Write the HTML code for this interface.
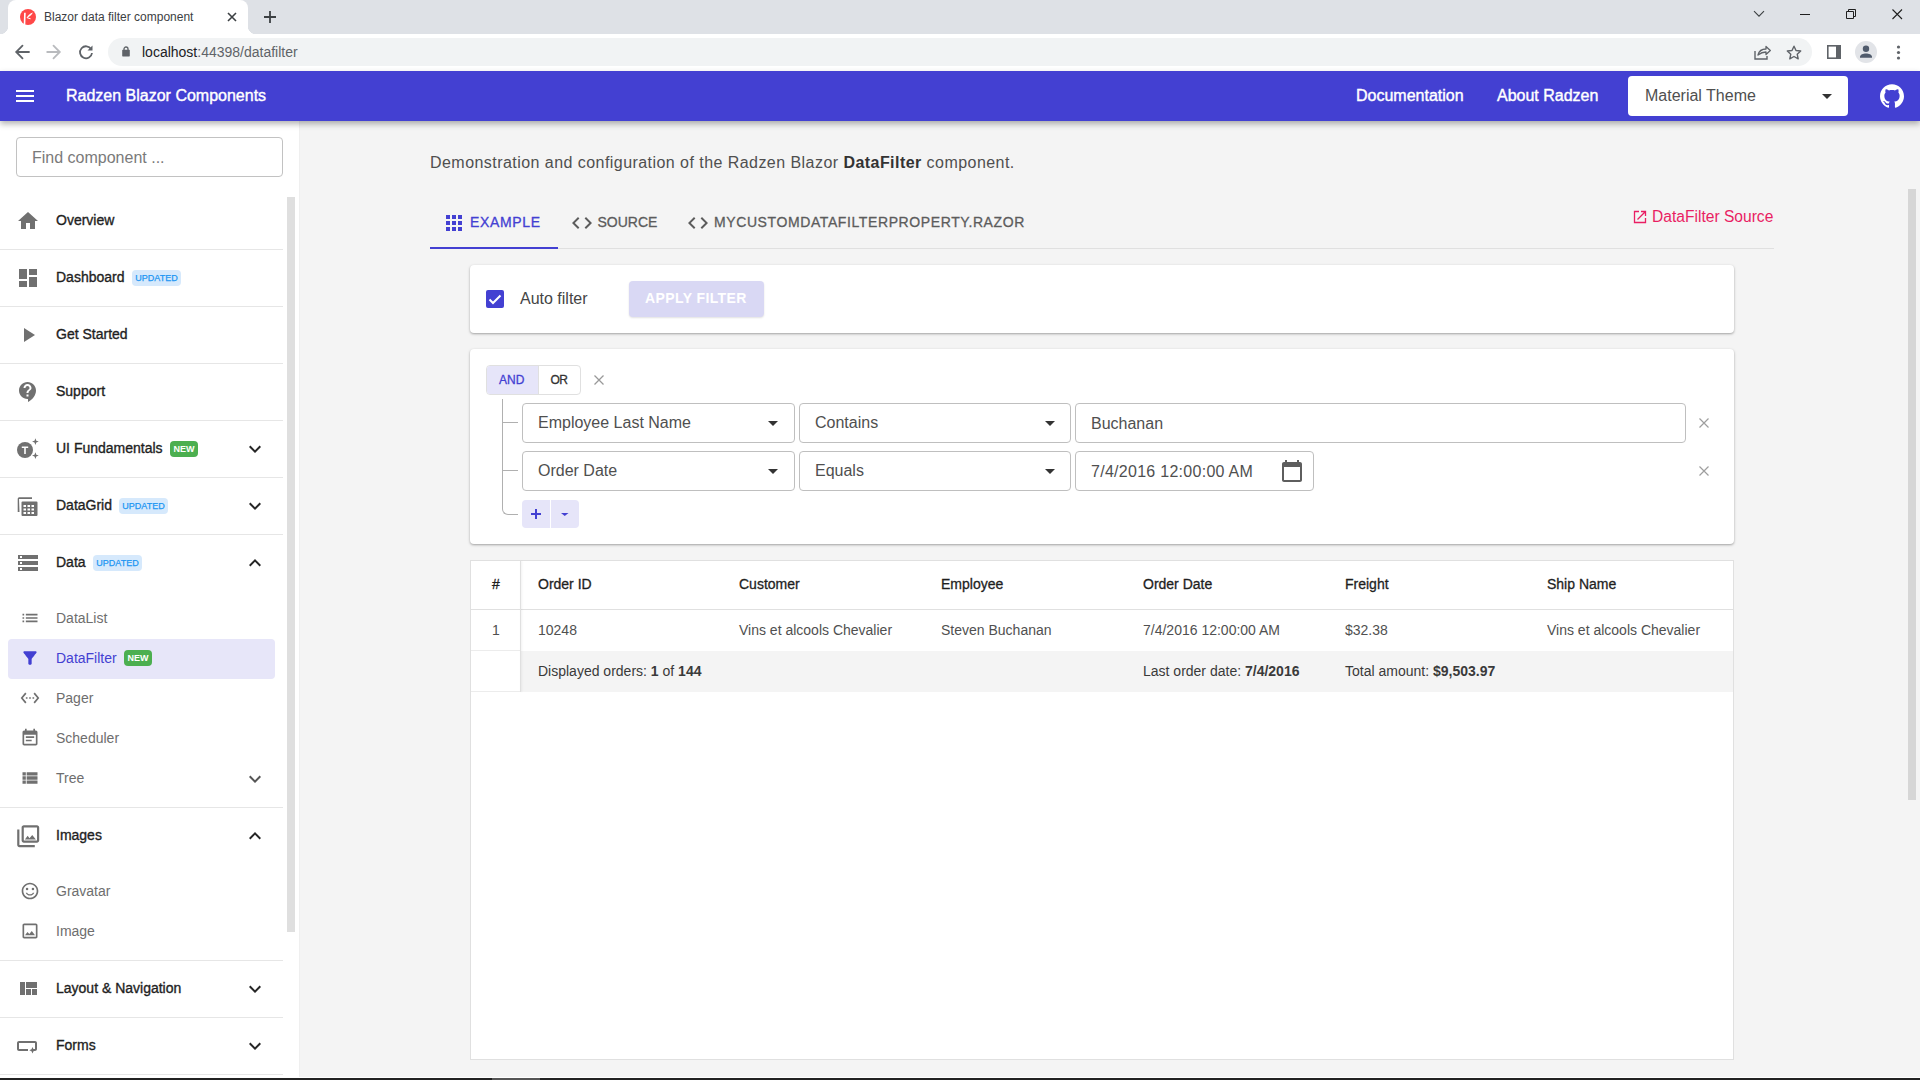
<!DOCTYPE html>
<html><head><meta charset="utf-8">
<style>
*{box-sizing:border-box;margin:0;padding:0}
html,body{width:1920px;height:1080px;overflow:hidden;font-family:"Liberation Sans",sans-serif;background:#f4f4f4;position:relative}
.a{position:absolute}
svg{display:block;position:absolute}
.t{position:absolute;white-space:nowrap;line-height:1}
/* chrome */
#tabbar{left:0;top:0;width:1920px;height:34px;background:#dee1e6}
#tab{left:8px;top:0;width:240px;height:34px;background:#fff;border-radius:8px 8px 0 0}
#toolbar{left:0;top:34px;width:1920px;height:37px;background:#fff}
#omni{left:108px;top:38px;width:1704px;height:28px;background:#f1f3f4;border-radius:14px}
/* header */
#header{left:0;top:71px;width:1920px;height:50px;background:#4340d2;box-shadow:0 3px 6px rgba(0,0,0,.3);z-index:5}
.h{color:#fff;font-size:16px;-webkit-text-stroke:.4px #fff}
/* sidebar */
#sidebar{left:0;top:121px;width:300px;height:956px;background:#fff;border-right:1px solid #efefef}
.nav{font-size:14px;color:#1f1f1f;-webkit-text-stroke:.35px #1f1f1f}
.dv{position:absolute;left:0;width:283px;height:1px;background:#e6e6e6}
.sub{font-size:14px;color:#6e6e6e}
.badge{position:absolute;height:16px;border-radius:4px;font-size:9px;line-height:16px;text-align:center;-webkit-text-stroke:.25px currentColor}
.upd{background:#d6e9fc;color:#2196f3;width:49px}
.new{background:#4caf50;color:#fff;width:28px;font-weight:bold;-webkit-text-stroke:0}
.ico{fill:#707070}
.chev{fill:#262626}
/* main */
.card{position:absolute;background:#fff;border-radius:4px;box-shadow:0 1px 2.5px rgba(0,0,0,.35)}
.inp{position:absolute;background:#fff;border:1px solid #bfbfbf;border-radius:4px}
.it{font-size:16px;color:#4f4f4f}
.tc{font-size:14px;color:#505050}
.th{font-size:14px;color:#1f1f1f;-webkit-text-stroke:.3px #1f1f1f}
.ft{font-size:14px;color:#3a3a3a}
.tab{font-size:14px;color:#5c5c5c;-webkit-text-stroke:.3px currentColor}
</style></head><body>

<!-- ===== Browser chrome ===== -->
<div id="tabbar" class="a"></div>
<div id="tab" class="a"></div>
<div class="a" style="left:0;top:26px;width:8px;height:8px;background:radial-gradient(circle at 0 0,#dee1e6 8px,#fff 8.5px)"></div>
<div class="a" style="left:248px;top:26px;width:8px;height:8px;background:radial-gradient(circle at 8px 0,#dee1e6 8px,#fff 8.5px)"></div>
<div id="toolbar" class="a"></div>
<div id="omni" class="a"></div>
<!-- favicon -->
<svg style="left:20px;top:9px" width="16" height="16" viewBox="0 0 16 16"><circle cx="8" cy="8" r="8" fill="#ff4848"/><path d="M4.9 3.8L4.5 16" stroke="#fff" stroke-width="1.6" fill="none"/><path d="M6.6 8.9C7.8 6.2 10.3 4.3 12.9 3.6 11.8 6 9.4 8.1 6.6 8.9z" fill="#fff"/><path d="M6.8 8.6l3.8 1.2" stroke="#fff" stroke-width="1" fill="none"/></svg>
<div class="t" style="left:44px;top:11px;font-size:12px;color:#3c4043">Blazor data filter component</div>
<svg style="left:226px;top:11px" width="12" height="12" viewBox="0 0 12 12"><path d="M2 2l8 8M10 2l-8 8" stroke="#3c4043" stroke-width="1.6"/></svg>
<svg style="left:263px;top:11px" width="14" height="12" viewBox="0 0 14 12"><path d="M7 0v12M1 6h12" stroke="#3c4043" stroke-width="1.8"/></svg>
<!-- window controls -->
<svg style="left:1752px;top:9px" width="14" height="12" viewBox="0 0 14 12"><path d="M2 2.2l5 5 5-5" stroke="#3c4043" stroke-width="1.1" fill="none"/></svg>
<div class="a" style="left:1800px;top:14px;width:10px;height:1px;background:#1f1f1f"></div>
<svg style="left:1845px;top:8px" width="12" height="12" viewBox="0 0 12 12"><path d="M1.5 3.5h7v7h-7z M3.5 3.5v-2h7v7h-2" stroke="#1f1f1f" stroke-width="1" fill="none"/></svg>
<svg style="left:1891px;top:9px" width="12" height="11" viewBox="0 0 12 11"><path d="M1.5 .5l9.5 9.5M11 .5l-9.5 9.5" stroke="#1f1f1f" stroke-width="1.1"/></svg>
<!-- nav buttons -->
<svg style="left:14px;top:44px" width="16" height="16" viewBox="0 0 16 16"><path d="M15 8H2.2M8.5 1.6L2.2 8l6.3 6.4" stroke="#5f6368" stroke-width="1.8" fill="none" stroke-linecap="round"/></svg>
<svg style="left:46px;top:44px" width="16" height="16" viewBox="0 0 16 16"><path d="M1.2 8h12.6M7.5 1.6L13.8 8l-6.3 6.4" stroke="#b9bbbe" stroke-width="1.8" fill="none" stroke-linecap="round"/></svg>
<svg style="left:78px;top:44px" width="16" height="16" viewBox="0 0 16 16"><path d="M13.2 5.2A6 6 0 1 0 14 9" stroke="#5f6368" stroke-width="1.8" fill="none"/><path d="M14.5 1.5v5h-5z" fill="#5f6368"/></svg>
<svg style="left:121px;top:45px" width="10" height="12" viewBox="0 0 10 12"><path d="M3 5.5V4a2 2 0 0 1 4 0v1.5" stroke="#5f6368" stroke-width="1.3" fill="none"/><rect x="1.2" y="4.8" width="7.6" height="6.6" rx=".6" fill="#5f6368"/></svg>
<div class="t" style="left:142px;top:45px;font-size:14px;color:#202124">localhost<span style="color:#5f6368">:44398/datafilter</span></div>
<!-- right toolbar icons -->
<svg style="left:1754px;top:45px" width="17" height="15" viewBox="0 0 17 15"><path d="M1 6v8h12v-3" stroke="#5f6368" stroke-width="1.4" fill="none"/><path d="M4 10c1-4 4-6 8-6V1.5l4.3 4-4.3 4V7c-3 0-5.5 1-8 3z" stroke="#5f6368" stroke-width="1.3" fill="none" stroke-linejoin="round"/></svg>
<svg style="left:1786px;top:45px" width="16" height="15" viewBox="0 0 16 15"><path d="M8 1.2l2 4.3 4.7.5-3.5 3.2 1 4.6L8 11.5l-4.2 2.3 1-4.6L1.3 6l4.7-.5z" stroke="#5f6368" stroke-width="1.4" fill="none" stroke-linejoin="round"/></svg>
<svg style="left:1827px;top:45px" width="14" height="14" viewBox="0 0 14 14"><rect x=".8" y=".8" width="12.4" height="12.4" stroke="#5f6368" stroke-width="1.6" fill="none"/><rect x="9" y="0" width="5" height="14" fill="#5f6368"/></svg>
<div class="a" style="left:1855px;top:41px;width:22px;height:22px;border-radius:11px;background:#e2e4e8"></div>
<svg style="left:1858px;top:44px" width="16" height="16" viewBox="0 0 16 16"><circle cx="8" cy="4.8" r="3.2" fill="#505b6c"/><path d="M2 13.8v-1c0-2.2 3.3-3.4 6-3.4s6 1.2 6 3.4v1z" fill="#505b6c"/></svg>
<svg style="left:1896px;top:45px" width="5" height="15" viewBox="0 0 5 15"><circle cx="2.5" cy="2" r="1.6" fill="#5f6368"/><circle cx="2.5" cy="7.5" r="1.6" fill="#5f6368"/><circle cx="2.5" cy="13" r="1.6" fill="#5f6368"/></svg>

<!-- ===== Header ===== -->
<div id="header" class="a">
  <svg style="left:16px;top:19px" width="18" height="12" viewBox="0 0 18 12"><rect x="0" y="0" width="18" height="2" fill="#fff"/><rect x="0" y="5" width="18" height="2" fill="#fff"/><rect x="0" y="10" width="18" height="2" fill="#fff"/></svg>
  <div class="t h" style="left:66px;top:17px">Radzen Blazor Components</div>
  <div class="t h" style="left:1356px;top:17px">Documentation</div>
  <div class="t h" style="left:1497px;top:17px">About Radzen</div>
  <div class="a" style="left:1628px;top:5px;width:220px;height:40px;background:#fff;border-radius:4px"></div>
  <div class="t" style="left:1645px;top:17px;font-size:16px;color:#4f4f4f">Material Theme</div>
  <svg style="left:1815px;top:13px" width="24" height="24" viewBox="0 0 24 24"><path d="M7 10l5 5 5-5z" fill="#333"/></svg>
  <svg style="left:1880px;top:13px" width="24" height="24" viewBox="0 0 24 24"><path fill="#fff" d="M12 .297c-6.63 0-12 5.373-12 12 0 5.303 3.438 9.8 8.205 11.385.6.113.82-.258.82-.577 0-.285-.01-1.04-.015-2.04-3.338.724-4.042-1.61-4.042-1.61C4.422 18.07 3.633 17.7 3.633 17.7c-1.087-.744.084-.729.084-.729 1.205.084 1.838 1.236 1.838 1.236 1.07 1.835 2.809 1.305 3.495.998.108-.776.417-1.305.76-1.605-2.665-.3-5.466-1.332-5.466-5.93 0-1.31.465-2.38 1.235-3.22-.135-.303-.54-1.523.105-3.176 0 0 1.005-.322 3.3 1.23.96-.267 1.98-.399 3-.405 1.02.006 2.04.138 3 .405 2.28-1.552 3.285-1.23 3.285-1.23.645 1.653.24 2.873.12 3.176.765.84 1.23 1.91 1.23 3.22 0 4.61-2.805 5.625-5.475 5.92.42.36.81 1.096.81 2.22 0 1.606-.015 2.896-.015 3.286 0 .315.21.69.825.57C20.565 22.092 24 17.592 24 12.297c0-6.627-5.373-12-12-12"/></svg>
</div>

<!-- ===== Sidebar ===== -->
<div id="sidebar" class="a"></div>
<div class="a" style="left:16px;top:137px;width:267px;height:40px;border:1px solid #c2c2c2;border-radius:4px;background:#fff"></div>
<div class="t" style="left:32px;top:150px;font-size:16px;color:#7a7a7a">Find component ...</div>
<div class="a" style="left:287px;top:197px;width:8px;height:735px;background:#dfdfdf"></div>
<!-- Overview c=220 -->
<svg class="ico" style="left:16px;top:209px" width="24" height="24" viewBox="0 0 24 24"><path d="M10 20v-6h4v6h5v-8h3L12 3 2 12h3v8z"/></svg>
<div class="t nav" style="left:56px;top:213px">Overview</div>
<div class="dv" style="top:249px"></div>
<!-- Dashboard c=277 -->
<svg class="ico" style="left:16px;top:266px" width="24" height="24" viewBox="0 0 24 24"><path d="M3 13h8V3H3v10zm0 8h8v-6H3v6zm10 0h8V11h-8v10zm0-18v6h8V3h-8z"/></svg>
<div class="t nav" style="left:56px;top:270px">Dashboard</div>
<div class="badge upd" style="left:132px;top:270px">UPDATED</div>
<div class="dv" style="top:306px"></div>
<!-- Get Started c=334 -->
<svg class="ico" style="left:16px;top:323px" width="24" height="24" viewBox="0 0 24 24"><path d="M8 5v14l11-7z"/></svg>
<div class="t nav" style="left:56px;top:327px">Get Started</div>
<div class="dv" style="top:363px"></div>
<!-- Support c=391 -->
<svg class="ico" style="left:16px;top:380px" width="24" height="24" viewBox="0 0 24 24"><path d="M11.5 2C6.81 2 3 5.81 3 10.5S6.81 19 11.5 19h.5v3c4.86-2.34 8-7 8-11.5C20 5.81 16.19 2 11.5 2zm1 14.5h-2v-2h2v2zm0-3.5h-2c0-3.25 3-3 3-5 0-1.1-.9-2-2-2s-2 .9-2 2h-2c0-2.21 1.79-4 4-4s4 1.79 4 4c0 2.5-3 2.75-3 5z"/></svg>
<div class="t nav" style="left:56px;top:384px">Support</div>
<div class="dv" style="top:420px"></div>
<!-- UI Fundamentals c=448 -->
<svg class="ico" style="left:16px;top:437px" width="24" height="24" viewBox="0 0 24 24"><circle cx="9" cy="13" r="8"/><path d="M5.8 9.5h6.4v1.6H9.8V17H8.2v-5.9H5.8z" fill="#fff"/><path d="M19.4 1.2l.9 2.5 2.5.9-2.5.9-.9 2.5-.9-2.5-2.5-.9 2.5-.9zM19.4 15.2l.9 2.5 2.5.9-2.5.9-.9 2.5-.9-2.5-2.5-.9 2.5-.9z"/></svg>
<div class="t nav" style="left:56px;top:441px">UI Fundamentals</div>
<div class="badge new" style="left:170px;top:441px">NEW</div>
<svg class="chev" style="left:243px;top:437px" width="24" height="24" viewBox="0 0 24 24"><path d="M16.59 8.59L12 13.17 7.41 8.59 6 10l6 6 6-6z"/></svg>
<div class="dv" style="top:477px"></div>
<!-- DataGrid c=505 -->
<svg class="ico" style="left:16px;top:494px" width="24" height="24" viewBox="0 0 24 24"><path d="M3 5h13V3.2H3.2A1.5 1.5 0 0 0 1.7 4.7V18h1.8z" /><path d="M6.5 7.5h14a1 1 0 0 1 1 1V21a1 1 0 0 1-1 1h-14a1 1 0 0 1-1-1V8.5a1 1 0 0 1 1-1zm1 3.5v2h2.5v-2zm4 0v2H14v-2zm4 0v2h2.5v-2zm-8 3.5v2h2.5v-2zm4 0v2H14v-2zm4 0v2h2.5v-2zm-8 3.5v2h2.5v-2zm4 0v2H14v-2zm4 0v2h2.5v-2z" fill-rule="evenodd"/></svg>
<div class="t nav" style="left:56px;top:498px">DataGrid</div>
<div class="badge upd" style="left:119px;top:498px">UPDATED</div>
<svg class="chev" style="left:243px;top:494px" width="24" height="24" viewBox="0 0 24 24"><path d="M16.59 8.59L12 13.17 7.41 8.59 6 10l6 6 6-6z"/></svg>
<div class="dv" style="top:534px"></div>
<!-- Data c=562 -->
<svg class="ico" style="left:16px;top:551px" width="24" height="24" viewBox="0 0 24 24"><path d="M2 20h20v-4H2v4zm2-3h2v2H4v-2zM2 4v4h20V4H2zm4 3H4V5h2v2zm-4 7h20v-4H2v4zm2-3h2v2H4v-2z"/></svg>
<div class="t nav" style="left:56px;top:555px">Data</div>
<div class="badge upd" style="left:93px;top:555px">UPDATED</div>
<svg class="chev" style="left:243px;top:551px" width="24" height="24" viewBox="0 0 24 24"><path d="M12 8l-6 6 1.41 1.41L12 10.83l4.59 4.58L18 14z"/></svg>
<!-- DataList c=618 -->
<svg class="ico" style="left:19.5px;top:608px" width="20" height="20" viewBox="0 0 24 24"><path d="M3 13h2v-2H3v2zm0 4h2v-2H3v2zm0-8h2V7H3v2zm4 4h14v-2H7v2zm0 4h14v-2H7v2zM7 7v2h14V7H7z"/></svg>
<div class="t sub" style="left:56px;top:611px">DataList</div>
<!-- DataFilter selected c=658 -->
<div class="a" style="left:8px;top:639px;width:267px;height:40px;border-radius:4px;background:#e7e6f9"></div>
<svg style="left:19.5px;top:648px" width="20" height="20" viewBox="0 0 24 24"><path fill="#4340d2" d="M4.25 5.61C6.27 8.2 10 13 10 13v6c0 .55.45 1 1 1h2c.55 0 1-.45 1-1v-6s3.72-4.8 5.74-7.39c.51-.66.04-1.61-.79-1.61H5.04c-.83 0-1.3.95-.79 1.61z"/></svg>
<div class="t sub" style="left:56px;top:651px;color:#4340d2">DataFilter</div>
<div class="badge new" style="left:124px;top:650px">NEW</div>
<!-- Pager c=698 -->
<svg class="ico" style="left:19.5px;top:688px" width="20" height="20" viewBox="0 0 24 24"><path d="M7.77 6.76L6.23 5.48.82 12l5.41 6.52 1.54-1.28L3.42 12l4.35-5.24zM7 13h2v-2H7v2zm10-2h-2v2h2v-2zm-6 2h2v-2h-2v2zm6.77-7.52l-1.54 1.28L20.58 12l-4.35 5.24 1.54 1.28L23.18 12l-5.41-6.52z"/></svg>
<div class="t sub" style="left:56px;top:691px">Pager</div>
<!-- Scheduler c=738 -->
<svg class="ico" style="left:19.5px;top:728px" width="20" height="20" viewBox="0 0 24 24"><path d="M17 10H7v2h10v-2zm2-7h-1V1h-2v2H8V1H6v2H5c-1.11 0-1.99.9-1.99 2L3 19c0 1.1.89 2 2 2h14c1.1 0 2-.9 2-2V5c0-1.1-.9-2-2-2zm0 16H5V8h14v11zm-5-5H7v2h7v-2z"/></svg>
<div class="t sub" style="left:56px;top:731px">Scheduler</div>
<!-- Tree c=778 -->
<svg class="ico" style="left:19.5px;top:768px" width="20" height="20" viewBox="0 0 24 24"><path d="M3 14h4v-4H3v4zm0 5h4v-4H3v4zM3 9h4V5H3v4zm5 5h13v-4H8v4zm0 5h13v-4H8v4zM8 5v4h13V5H8z"/></svg>
<div class="t sub" style="left:56px;top:771px">Tree</div>
<svg style="left:243px;top:767px;fill:#555" width="24" height="24" viewBox="0 0 24 24"><path d="M16.59 8.59L12 13.17 7.41 8.59 6 10l6 6 6-6z"/></svg>
<div class="dv" style="top:807px"></div>
<!-- Images c=835 -->
<svg class="ico" style="left:15px;top:822.5px" width="26.4" height="26.4" viewBox="0 0 24 24"><path d="M20 4v12H8V4h12m0-2H8c-1.1 0-2 .9-2 2v12c0 1.1.9 2 2 2h12c1.1 0 2-.9 2-2V4c0-1.1-.9-2-2-2zm-8.5 9.67l1.69 2.26 2.48-3.1L19 15H9zM2 6v14c0 1.1.9 2 2 2h14v-2H4V6H2z"/></svg>
<div class="t nav" style="left:56px;top:828px">Images</div>
<svg class="chev" style="left:243px;top:824px" width="24" height="24" viewBox="0 0 24 24"><path d="M12 8l-6 6 1.41 1.41L12 10.83l4.59 4.58L18 14z"/></svg>
<!-- Gravatar c=891 -->
<svg class="ico" style="left:19.5px;top:881px" width="20" height="20" viewBox="0 0 24 24"><circle cx="15.5" cy="9.5" r="1.5"/><circle cx="8.5" cy="9.5" r="1.5"/><path d="M12 16c-1.48 0-2.75-.81-3.45-2H6.88c.8 2.05 2.79 3.5 5.12 3.5s4.32-1.45 5.12-3.5h-1.67c-.69 1.19-1.97 2-3.45 2zm-.01-14C6.47 2 2 6.48 2 12s4.47 10 9.99 10C17.52 22 22 17.52 22 12S17.52 2 11.99 2zM12 20c-4.42 0-8-3.58-8-8s3.58-8 8-8 8 3.58 8 8-3.58 8-8 8z"/></svg>
<div class="t sub" style="left:56px;top:884px">Gravatar</div>
<!-- Image c=931 -->
<svg class="ico" style="left:19.5px;top:921px" width="20" height="20" viewBox="0 0 24 24"><path d="M19 5v14H5V5h14m0-2H5c-1.1 0-2 .9-2 2v14c0 1.1.9 2 2 2h14c1.1 0 2-.9 2-2V5c0-1.1-.9-2-2-2zm-4.86 8.86l-3 3.87L9 13.14 6 17h12l-3.86-5.14z"/></svg>
<div class="t sub" style="left:56px;top:924px">Image</div>
<div class="dv" style="top:960px"></div>
<!-- Layout c=988 -->
<svg class="ico" style="left:16px;top:977px" width="24" height="24" viewBox="0 0 24 24"><path d="M10 18h5v-6h-5v6zm-6 0h5V5H4v13zm12 0h5v-6h-5v6zM10 5v6h11V5H10z"/></svg>
<div class="t nav" style="left:56px;top:981px">Layout &amp; Navigation</div>
<svg class="chev" style="left:243px;top:977px" width="24" height="24" viewBox="0 0 24 24"><path d="M16.59 8.59L12 13.17 7.41 8.59 6 10l6 6 6-6z"/></svg>
<div class="dv" style="top:1017px"></div>
<!-- Forms c=1045 -->
<svg class="ico" style="left:16px;top:1034px" width="24" height="24" viewBox="0 0 24 24"><path d="M21 9.5v5.5c0 1.1-.9 2-2 2h-3v-2h3V9H3v6h9v2H3c-1.1 0-2-.9-2-2V9c0-1.1.9-2 2-2h16c1.1 0 2 .9 2 2zM16.5 13l1 2.2 2.2 1-2.2 1-1 2.3-1-2.3-2.2-1 2.2-1z"/></svg>
<div class="t nav" style="left:56px;top:1038px">Forms</div>
<svg class="chev" style="left:243px;top:1034px" width="24" height="24" viewBox="0 0 24 24"><path d="M16.59 8.59L12 13.17 7.41 8.59 6 10l6 6 6-6z"/></svg>
<div class="dv" style="top:1074px"></div>


<!-- ===== Main ===== -->
<div class="t" style="left:430px;top:155px;font-size:16px;color:#4f4f4f;letter-spacing:.45px">Demonstration and configuration of the Radzen Blazor <b style="color:#333">DataFilter</b> component.</div>
<!-- tabs -->
<div class="a" style="left:430px;top:248px;width:1344px;height:1px;background:#e0e0e0"></div>
<div class="a" style="left:430px;top:247px;width:128px;height:2px;background:#4340d2"></div>
<svg style="left:446px;top:215px" width="16" height="16" viewBox="0 0 16 16" fill="#4340d2"><rect x="0" y="0" width="4" height="4"/><rect x="6" y="0" width="4" height="4"/><rect x="12" y="0" width="4" height="4"/><rect x="0" y="6" width="4" height="4"/><rect x="6" y="6" width="4" height="4"/><rect x="12" y="6" width="4" height="4"/><rect x="0" y="12" width="4" height="4"/><rect x="6" y="12" width="4" height="4"/><rect x="12" y="12" width="4" height="4"/></svg>
<div class="t tab" style="left:470px;top:215px;color:#4340d2;letter-spacing:.65px">EXAMPLE</div>
<svg style="left:570px;top:211px" width="24" height="24" viewBox="0 0 24 24"><path fill="#5c5c5c" d="M9.4 16.6L4.8 12l4.6-4.6L8 6l-6 6 6 6 1.4-1.4zm5.2 0l4.6-4.6-4.6-4.6L16 6l6 6-6 6-1.4-1.4z"/></svg>
<div class="t tab" style="left:597.5px;top:215px;letter-spacing:0px">SOURCE</div>
<svg style="left:686px;top:211px" width="24" height="24" viewBox="0 0 24 24"><path fill="#5c5c5c" d="M9.4 16.6L4.8 12l4.6-4.6L8 6l-6 6 6 6 1.4-1.4zm5.2 0l4.6-4.6-4.6-4.6L16 6l6 6-6 6-1.4-1.4z"/></svg>
<div class="t tab" style="left:714px;top:215px;letter-spacing:.6px">MYCUSTOMDATAFILTERPROPERTY.RAZOR</div>
<svg style="left:1633px;top:210px" width="14" height="14" viewBox="0 0 14 14"><path d="M6 1.5H1.5v11h11V8" stroke="#e91e63" stroke-width="1.3" fill="none"/><path d="M8 1.5h4.5V6M12.5 1.5L4.5 9.5" stroke="#e91e63" stroke-width="1.3" fill="none"/></svg>
<div class="t" style="left:1652px;top:209px;font-size:15.6px;color:#e91e63">DataFilter Source</div>

<!-- card 1 -->
<div class="card" style="left:470px;top:265px;width:1264px;height:68px"></div>
<div class="a" style="left:486px;top:290px;width:18px;height:18px;background:#4340d2;border-radius:2px"></div>
<svg style="left:486px;top:290px" width="18" height="18" viewBox="0 0 18 18"><path d="M3.5 9.5l3.5 3.5 7.5-7.5" stroke="#fff" stroke-width="2" fill="none"/></svg>
<div class="t" style="left:520px;top:291px;font-size:16px;color:#454545">Auto filter</div>
<div class="a" style="left:629px;top:281px;width:135px;height:36px;background:#d9d8f4;border-radius:4px;box-shadow:0 1px 2px rgba(0,0,0,.12)"></div>
<div class="t" style="left:645px;top:291px;font-size:14px;font-weight:bold;color:#fff;letter-spacing:.4px">APPLY FILTER</div>

<!-- card 2 -->
<div class="card" style="left:470px;top:349px;width:1264px;height:195px"></div>
<div class="a" style="left:486px;top:365px;width:95px;height:30px;border:1px solid #e0e0e0;border-radius:4px;background:#fff;overflow:hidden"><div class="a" style="left:0;top:0;width:52px;height:28px;background:#e6e5f9;border-right:1px solid #e0e0e0"></div></div>
<div class="t" style="left:499px;top:374px;font-size:12px;color:#4340d2;letter-spacing:.1px;-webkit-text-stroke:.3px #4340d2">AND</div>
<div class="t" style="left:550.5px;top:374px;font-size:12px;color:#333;letter-spacing:-.5px;-webkit-text-stroke:.3px #333">OR</div>
<svg style="left:593px;top:374px" width="12" height="12" viewBox="0 0 12 12"><path d="M1.5 1.5l9 9M10.5 1.5l-9 9" stroke="#999" stroke-width="1.3"/></svg>
<!-- tree lines -->
<div class="a" style="left:502px;top:399px;width:1px;height:108px;background:#b0b0b0"></div>
<div class="a" style="left:502px;top:506px;width:16px;height:9px;border-left:1px solid #b0b0b0;border-bottom:1px solid #b0b0b0;border-bottom-left-radius:6px"></div>
<div class="a" style="left:502px;top:422px;width:16px;height:1px;background:#b0b0b0"></div>
<div class="a" style="left:502px;top:470px;width:16px;height:1px;background:#b0b0b0"></div>
<!-- row 1 -->
<div class="inp" style="left:522px;top:403px;width:273px;height:40px"></div>
<div class="t it" style="left:538px;top:415px">Employee Last Name</div>
<svg style="left:761px;top:411px" width="24" height="24" viewBox="0 0 24 24"><path d="M7 10l5 5 5-5z" fill="#333"/></svg>
<div class="inp" style="left:799px;top:403px;width:272px;height:40px"></div>
<div class="t it" style="left:815px;top:415px">Contains</div>
<svg style="left:1038px;top:411px" width="24" height="24" viewBox="0 0 24 24"><path d="M7 10l5 5 5-5z" fill="#333"/></svg>
<div class="inp" style="left:1075px;top:403px;width:611px;height:40px"></div>
<div class="t it" style="left:1091px;top:416px">Buchanan</div>
<svg style="left:1698px;top:417px" width="12" height="12" viewBox="0 0 12 12"><path d="M1.5 1.5l9 9M10.5 1.5l-9 9" stroke="#9e9e9e" stroke-width="1.2"/></svg>
<!-- row 2 -->
<div class="inp" style="left:522px;top:451px;width:273px;height:40px"></div>
<div class="t it" style="left:538px;top:463px">Order Date</div>
<svg style="left:761px;top:459px" width="24" height="24" viewBox="0 0 24 24"><path d="M7 10l5 5 5-5z" fill="#333"/></svg>
<div class="inp" style="left:799px;top:451px;width:272px;height:40px"></div>
<div class="t it" style="left:815px;top:463px">Equals</div>
<svg style="left:1038px;top:459px" width="24" height="24" viewBox="0 0 24 24"><path d="M7 10l5 5 5-5z" fill="#333"/></svg>
<div class="inp" style="left:1075px;top:451px;width:239px;height:40px"></div>
<div class="t it" style="left:1091px;top:464px;letter-spacing:.28px">7/4/2016 12:00:00 AM</div>
<svg style="left:1280px;top:459px" width="24" height="24" viewBox="0 0 24 24"><path fill="#5e5e5e" d="M20 3h-1V1h-2v2H7V1H5v2H4c-1.1 0-2 .9-2 2v16c0 1.1.9 2 2 2h16c1.1 0 2-.9 2-2V5c0-1.1-.9-2-2-2zm0 18H4V8h16v13z"/></svg>
<svg style="left:1698px;top:465px" width="12" height="12" viewBox="0 0 12 12"><path d="M1.5 1.5l9 9M10.5 1.5l-9 9" stroke="#9e9e9e" stroke-width="1.2"/></svg>
<!-- +/- -->
<div class="a" style="left:522px;top:500px;width:28px;height:28px;background:#e6e5f9;border-radius:4px 0 0 4px"></div>
<div class="a" style="left:551px;top:500px;width:28px;height:28px;background:#e6e5f9;border-radius:0 4px 4px 0"></div>
<svg style="left:531px;top:509px" width="10" height="10" viewBox="0 0 10 10"><path d="M5 0v10M0 5h10" stroke="#4340d2" stroke-width="2"/></svg>
<svg style="left:561px;top:513px" width="8" height="3" viewBox="0 0 8 3"><path d="M0 0h7.5L3.75 3z" fill="#4340d2"/></svg>

<!-- grid -->
<div class="a" style="left:470px;top:560px;width:1264px;height:500px;background:#fff;border:1px solid #e0e0e0"></div>
<div class="a" style="left:521px;top:651px;width:1212px;height:41px;background:#f4f4f4"></div>
<div class="a" style="left:471px;top:609px;width:1262px;height:1px;background:#e0e0e0"></div>
<div class="a" style="left:471px;top:650px;width:50px;height:1px;background:#ececec"></div>
<div class="a" style="left:471px;top:691px;width:50px;height:1px;background:#ececec"></div>
<div class="a" style="left:520px;top:561px;width:1px;height:131px;background:#e0e0e0;box-shadow:1px 0 2px rgba(0,0,0,.08)"></div>
<div class="t th" style="left:492px;top:577px">#</div>
<div class="t th" style="left:538px;top:577px">Order ID</div>
<div class="t th" style="left:739px;top:577px">Customer</div>
<div class="t th" style="left:941px;top:577px">Employee</div>
<div class="t th" style="left:1143px;top:577px">Order Date</div>
<div class="t th" style="left:1345px;top:577px">Freight</div>
<div class="t th" style="left:1547px;top:577px">Ship Name</div>
<div class="t tc" style="left:492px;top:623px">1</div>
<div class="t tc" style="left:538px;top:623px">10248</div>
<div class="t tc" style="left:739px;top:623px">Vins et alcools Chevalier</div>
<div class="t tc" style="left:941px;top:623px">Steven Buchanan</div>
<div class="t tc" style="left:1143px;top:623px">7/4/2016 12:00:00 AM</div>
<div class="t tc" style="left:1345px;top:623px">$32.38</div>
<div class="t tc" style="left:1547px;top:623px">Vins et alcools Chevalier</div>
<div class="t ft" style="left:538px;top:664px">Displayed orders: <b>1</b> of <b>144</b></div>
<div class="t ft" style="left:1143px;top:664px">Last order date: <b>7/4/2016</b></div>
<div class="t ft" style="left:1345px;top:664px">Total amount: <b>$9,503.97</b></div>

<!-- main scrollbar -->
<div class="a" style="left:1908px;top:189px;width:8px;height:611px;background:#d6d6d6"></div>


<!-- bottom bar -->
<div class="a" style="left:0;top:1077px;width:1920px;height:1px;background:#fff"></div><div class="a" style="left:0;top:1078px;width:1920px;height:2px;background:#222"></div><div class="a" style="left:492px;top:1078px;width:48px;height:2px;background:#555"></div>
</body></html>
